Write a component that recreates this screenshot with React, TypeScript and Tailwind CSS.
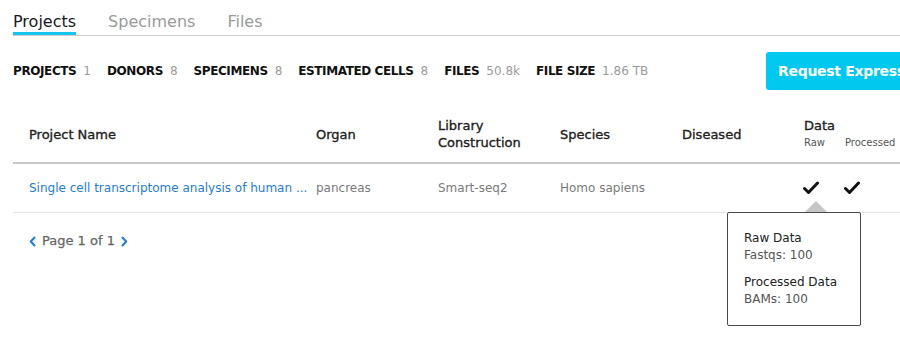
import React from 'react'

const font = { fontFamily: '"DejaVu Sans", "Liberation Sans", sans-serif' }

const stats = [
    { label: 'PROJECTS', value: '1' },
    { label: 'DONORS', value: '8' },
    { label: 'SPECIMENS', value: '8' },
    { label: 'ESTIMATED CELLS', value: '8' },
    { label: 'FILES', value: '50.8k' },
    { label: 'FILE SIZE', value: '1.86 TB' },
]

const Check = () => (
    <svg width="16" height="14" viewBox="0 0 16 14" className="block">
        <path d="M1.5 7.5 L5.5 11.5 L14.5 2" fill="none" stroke="#111" strokeWidth="3" strokeLinecap="round" strokeLinejoin="round" />
    </svg>
)

const Chevron = ({ dir }: { dir: 'left' | 'right' }) => (
    <svg width="7" height="11" viewBox="0 0 7 11" className="block">
        <path d={dir === 'left' ? 'M5.5 1.5 L1.8 5.5 L5.5 9.5' : 'M1.5 1.5 L5.2 5.5 L1.5 9.5'} fill="none" stroke="#1f7cd2" strokeWidth="2" strokeLinecap="round" strokeLinejoin="round" />
    </svg>
)

const Tooltip = () => (
    <div className="absolute left-[-76px] top-[20px] z-10">
        <div className="ml-[78px] w-0 h-0 border-l-[11px] border-r-[11px] border-b-[11px] border-l-transparent border-r-transparent border-b-[#c6c6c6]" />
        <div className="w-[134px] bg-white border border-[#4a4a4a] rounded-[2px] px-4 pt-[17px] pb-[17px] text-[12px] leading-[17px] text-[#333]">
            <div className="text-[#222]">Raw Data</div>
            <div className="text-[#555]">Fastqs: 100</div>
            <div className="mt-[10px] text-[#222]">Processed Data</div>
            <div className="text-[#555]">BAMs: 100</div>
        </div>
    </div>
)

const headCls = "pl-2 text-[13px] leading-[17px] text-[#222] [-webkit-text-stroke:0.35px_#222]"
const cellCls = "pl-2 text-[#7a7a7a]"

export default function App() {
    return (
        <div className="w-[900px] h-[364px] overflow-hidden bg-white px-[13px]" style={font}>
            {/* tabs */}
            <div className="flex gap-8 border-b border-[#cfcfcf] w-[900px]">
                <div className="pt-[11px] text-[16px] leading-[21px] text-[#1a1a1a] border-b-[3px] border-[#16c5ee]">Projects</div>
                <div className="pt-[11px] text-[16px] leading-[21px] text-[#9a9a9a]">Specimens</div>
                <div className="pt-[11px] text-[16px] leading-[21px] text-[#9a9a9a]">Files</div>
            </div>

            {/* stats + request button */}
            <div className="flex items-center mt-4 h-[38px]">
                <div className="w-[753px] shrink-0 flex items-center">
                    {stats.map(s => (
                        <div key={s.label} className="flex items-center mr-4 text-[12px] leading-[14px]">
                            <span className="font-bold text-[#111] tracking-[-0.4px]">{s.label}</span>
                            <span className="ml-[7px] text-[#9b9b9b]">{s.value}</span>
                        </div>
                    ))}
                </div>
                <button className="shrink-0 h-[38px] whitespace-nowrap rounded-[3px] bg-[#00c8ee] pl-3 pr-4 text-[14px] font-bold tracking-[-0.3px] text-white">
                    Request Expression Matrix
                </button>
            </div>

            {/* table */}
            <div className="w-[887px] mt-[16px]">
                <div className="grid grid-cols-[295px_122px_122px_122px_122px_1fr] items-center h-[58px] border-b-2 border-[#c8c8c8]">
                    <div className={headCls + " pl-4"}>Project Name</div>
                    <div className={headCls}>Organ</div>
                    <div className={headCls}>Library<br />Construction</div>
                    <div className={headCls}>Species</div>
                    <div className={headCls}>Diseased</div>
                    <div className="pl-2">
                        <div className="text-[13px] leading-[17px] text-[#222] [-webkit-text-stroke:0.35px_#222]">Data</div>
                        <div className="flex text-[10px] leading-[16px] text-[#555] mt-[1px]">
                            <span className="w-[41px]">Raw</span>
                            <span>Processed</span>
                        </div>
                    </div>
                </div>

                <div className="grid grid-cols-[295px_122px_122px_122px_122px_1fr] items-center h-[49px] border-b border-[#e6e6e6] text-[12px] leading-[17px]">
                    <div className="pl-4 whitespace-nowrap overflow-hidden text-[#1f7cd2]">Single cell transcriptome analysis of human ...</div>
                    <div className={cellCls}>pancreas</div>
                    <div className={cellCls}>Smart-seq2</div>
                    <div className={cellCls}>Homo sapiens</div>
                    <div className="pl-2" />
                    <div className="pl-[7px] flex items-center">
                        <div className="relative w-[41px]">
                            <Check />
                            <Tooltip />
                        </div>
                        <Check />
                    </div>
                </div>

                {/* pagination */}
                <div className="flex items-center pl-4 pt-[18px] text-[13px] leading-[20px]">
                    <Chevron dir="left" />
                    <span className="ml-[6px] text-[#666] [-webkit-text-stroke:0.25px_#666]">Page 1 of 1</span>
                    <span className="ml-[6px]"><Chevron dir="right" /></span>
                </div>
            </div>
        </div>
    )
}
